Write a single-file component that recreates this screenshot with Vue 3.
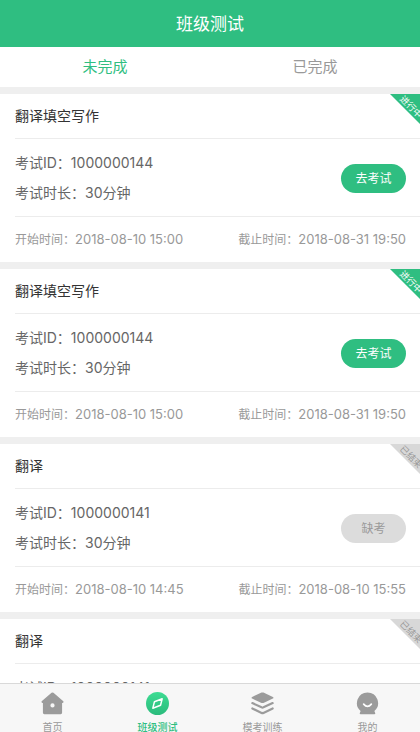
<script setup>
import { ref } from 'vue'

const tab = ref('todo')
const tabs = [
  { id: 'todo', label: '未完成' },
  { id: 'done', label: '已完成' },
]

const exams = [
  { title: '翻译填空写作', id: '1000000144', length: '30分钟', start: '2018-08-10 15:00', end: '2018-08-31 19:50', open: true },
  { title: '翻译填空写作', id: '1000000144', length: '30分钟', start: '2018-08-10 15:00', end: '2018-08-31 19:50', open: true },
  { title: '翻译', id: '1000000141', length: '30分钟', start: '2018-08-10 14:45', end: '2018-08-10 15:55', open: false },
  { title: '翻译', id: '1000000141', length: '30分钟', start: '2018-08-10 14:45', end: '2018-08-10 15:55', open: false },
]
</script>

<template>
  <div class="app">
    <header class="header"><h1>班级测试</h1></header>

    <div class="tabs">
      <button
        v-for="t in tabs"
        :key="t.id"
        type="button"
        class="tab"
        :class="{ active: tab === t.id }"
        @click="tab = t.id"
      >{{ t.label }}</button>
    </div>

    <main class="list">
      <article v-for="(exam, i) in exams" :key="i" class="card" :class="{ closed: !exam.open }">
        <div class="ribbon"><span>{{ exam.open ? '进行中' : '已结束' }}</span></div>
        <h2 class="title">{{ exam.title }}</h2>
        <div class="body">
          <div class="info">
            <p>考试ID：{{ exam.id }}</p>
            <p>考试时长：{{ exam.length }}</p>
          </div>
          <button type="button" class="action" :disabled="!exam.open">{{ exam.open ? '去考试' : '缺考' }}</button>
        </div>
        <div class="times">
          <span>开始时间：<time>{{ exam.start }}</time></span>
          <span>截止时间：<time>{{ exam.end }}</time></span>
        </div>
      </article>
    </main>

    <nav class="nav">
      <a href="#home">
        <svg viewBox="0 0 24 24" aria-hidden="true">
          <path fill="#9b9b9b" fill-rule="evenodd" d="M11 .8q1-.8 2 0L23 9.400q1.300 1.500-.5 2h-.5v10.300q0 1.500-1.500 1.500H3.500q-1.500 0-1.500-1.500V11.400h-.5q-1.800-.5-.5-2zM12 11.800a2.200 2.200 0 1 0 0 4.400a2.200 2.200 0 1 0 0-4.400z" />
        </svg>
        <span>首页</span>
      </a>
      <a href="#class" class="active">
        <svg viewBox="0 0 24 24" aria-hidden="true">
          <defs>
            <linearGradient id="disc" x1="0" y1="0" x2="0" y2="1">
              <stop offset="0" stop-color="#3ddc93" />
              <stop offset="1" stop-color="#2bbb7c" />
            </linearGradient>
          </defs>
          <circle cx="12" cy="12" r="12" fill="url(#disc)" />
          <path d="M16.900 7L15.200 13.800L7.100 17L8.800 10.200z" fill="none" stroke="#fff" stroke-width="1.500" stroke-linejoin="round" />
        </svg>
        <span>班级测试</span>
      </a>
      <a href="#mock">
        <svg viewBox="0 0 24 24" aria-hidden="true">
          <path fill="#9b9b9b" d="M11 .6q1-.4 2 0l9.800 4.500q1.400.9 0 1.800L13 11.400q-1 .4-2 0L1.200 6.900q-1.400-.9 0-1.800z" />
          <path d="M1.400 11.600L11 16q1 .4 2 0l9.600-4.400M1.400 17.200L11 21.800q1 .4 2 0l9.600-4.600" fill="none" stroke="#9b9b9b" stroke-width="2.300" stroke-linecap="round" />
        </svg>
        <span>模考训练</span>
      </a>
      <a href="#me">
        <svg viewBox="0 0 24 24" aria-hidden="true">
          <path fill="#9b9b9b" d="M12 .5a11 11 0 0 1 7.200 19.300l.9 2.400q.2 1-1 1H4.900q-1.200 0-1-1l.9-2.400A11 11 0 0 1 12 .5z" />
          <path d="M8 12.600q4 4.600 8 0" fill="none" stroke="#fff" stroke-width="1.800" stroke-linecap="round" />
        </svg>
        <span>我的</span>
      </a>
    </nav>
  </div>
</template>

<style>
body {
  margin: 0;
}
</style>

<style scoped>
.app {
  display: flex;
  flex-direction: column;
  height: 100vh;
  overflow: hidden;
  background: #efefef;
  color: #333;
  font-family: Inter, "Noto Sans CJK SC", sans-serif;
}

h1,
h2,
p {
  margin: 0;
  font-weight: 400;
}

button {
  border: 0;
  padding: 0;
  font-family: inherit;
}

.header {
  flex: none;
  padding-top: 1px;
  background: #2fbe81;
  color: #fff;
  text-align: center;
}

.header h1 {
  font-size: 17px;
  line-height: 46px;
}

.tabs {
  display: flex;
  flex: none;
  background: #fff;
}

.tab {
  flex: 1;
  background: none;
  color: #999;
  font-size: 15px;
  line-height: 40px;
}

.tab.active {
  color: #2fbe81;
}

.list {
  display: flex;
  flex: 1;
  flex-direction: column;
  gap: 7px;
  min-height: 0;
  padding-top: 7px;
  overflow-y: auto;
  scrollbar-width: none;
}

.card {
  position: relative;
  flex: none;
  padding-left: 15px;
  background: #fff;
}

.title {
  border-bottom: 1px solid #ececec;
  font-size: 14px;
  line-height: 44px;
}

.body {
  display: flex;
  align-items: center;
  justify-content: space-between;
  padding: 9px 14px 8px 0;
  border-bottom: 1px solid #ececec;
}

.info {
  color: #666;
  font-size: 14px;
  line-height: 30px;
}

.action {
  width: 65px;
  border-radius: 15px;
  background: #2fbe81;
  color: #fff;
  font-size: 12px;
  line-height: 29px;
}

.closed .action {
  background: #dcdcdc;
  color: #999;
}

.times {
  display: flex;
  justify-content: space-between;
  padding-right: 14px;
  color: #999;
  font-size: 12px;
  line-height: 45px;
}

.times time {
  font-size: 13px;
}

.ribbon {
  position: absolute;
  top: 0;
  right: 0;
  width: 30px;
  height: 30px;
  clip-path: polygon(0 0, 100% 0, 100% 100%);
  background: #2fbe81;
  color: #fff;
}

.ribbon span {
  position: absolute;
  top: 7px;
  left: 6px;
  width: 30px;
  font-size: 9px;
  line-height: 12px;
  text-align: center;
  white-space: nowrap;
  transform: rotate(45deg);
}

.closed .ribbon {
  background: #d8d8d8;
  color: #999;
}

.nav {
  display: flex;
  flex: none;
  height: 48px;
  border-top: 1px solid #d9d9d9;
  background: #f7f7f7;
}

.nav a {
  display: flex;
  flex: 1;
  flex-direction: column;
  align-items: center;
  gap: 4px;
  padding-top: 8px;
  color: #999;
  font-size: 10px;
  line-height: 16px;
  text-decoration: none;
}

.nav a.active {
  color: #2fbe81;
  font-weight: 500;
}

.nav svg {
  flex: none;
  width: 23px;
  height: 23px;
}
</style>
